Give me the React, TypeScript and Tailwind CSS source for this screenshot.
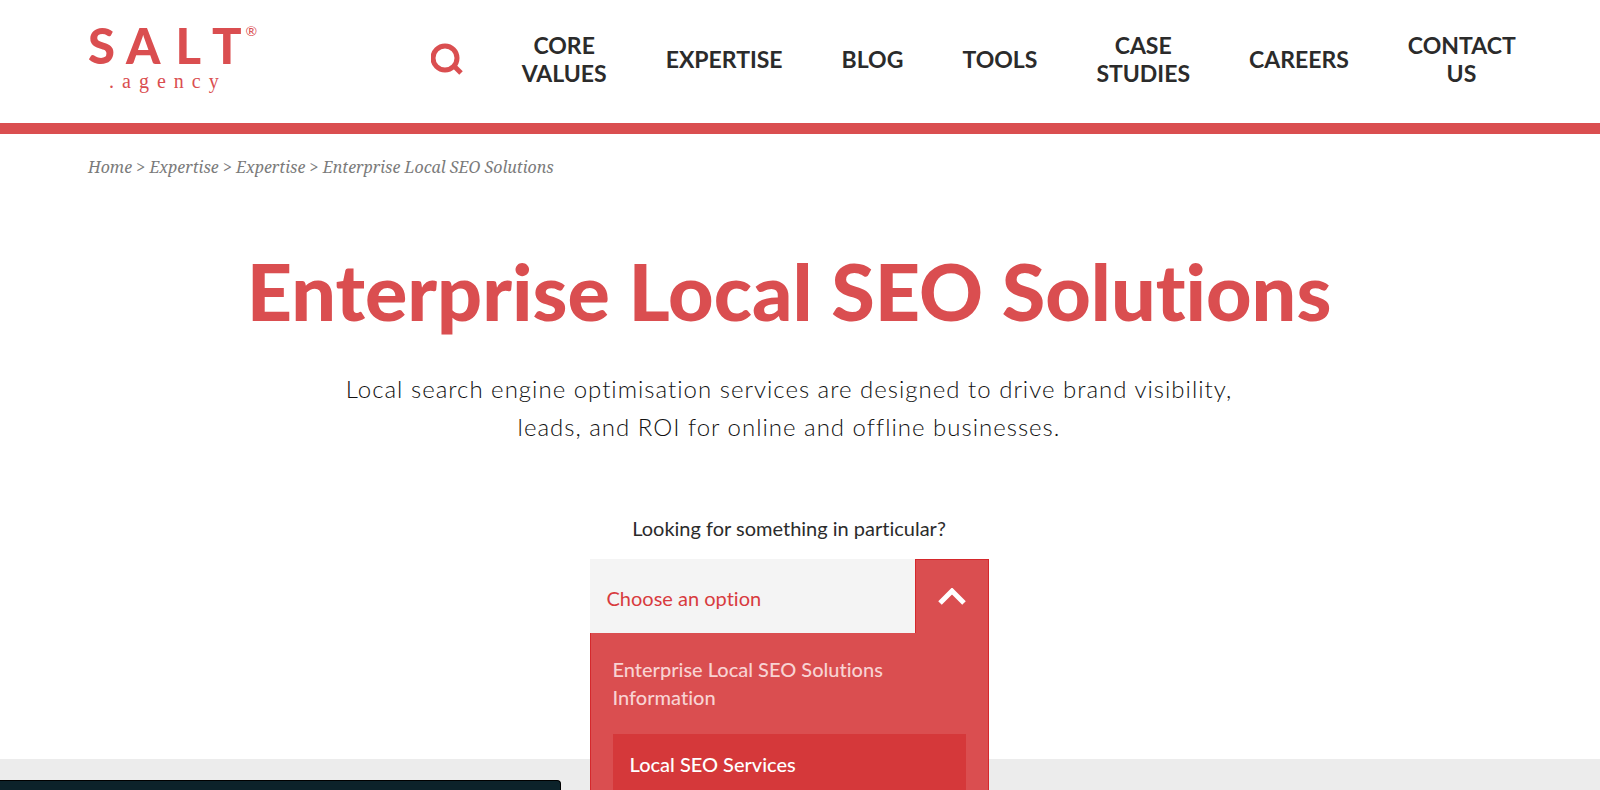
import { useState } from "react";

const navItems = ["Core Values", "Expertise", "Blog", "Tools", "Case Studies", "Careers", "Contact Us"];

const crumbs = ["Home", "Expertise", "Expertise"];

const Logo = () => (
  <a href="#home" className="mt-5 flex shrink-0 items-start gap-1 self-start text-[#da4e50]">
    <span className="flex flex-col">
      <span className="flex gap-[11px] text-[49px] leading-[50px] font-black">
        <span>S</span>
        <span>A</span>
        <span className="pl-1">L</span>
        <span>T</span>
      </span>
      <span className="pl-[21px] font-['Liberation_Serif',serif] text-[20px] leading-[22px] tracking-[8px]">.agency</span>
    </span>
    <span className="pt-[3px] text-[14px] leading-[16px]">®</span>
  </a>
);

const Header = () => (
  <header className="border-b-[11px] border-[#da4e50]">
    <div className="flex h-[123px] items-center justify-between pr-[85px] pb-[6px] pl-[88px]">
      <Logo />
      <nav className="flex items-center gap-[59px]">
        <button type="button" aria-label="Search" className="text-[#da4e50]">
          <svg viewBox="0 0 32 32" className="block h-8 w-8" fill="none" stroke="currentColor" strokeWidth="5">
            <circle cx="14" cy="15" r="12" />
            <path d="M22 22l8 8" />
          </svg>
        </button>
        {navItems.map((item) => (
          <a key={item} href="#nav" className="w-min text-center text-[23px] leading-[28px] font-bold text-[#2b2b2b] uppercase">
            {item}
          </a>
        ))}
      </nav>
    </div>
  </header>
);

const Breadcrumbs = () => (
  <nav aria-label="Breadcrumb" className="px-[88px] pt-[21px] font-['Noto_Serif','Liberation_Serif',serif] text-[16px] leading-[24px] text-[#7b7b7b] italic">
    {crumbs.map((crumb, i) => (
      <span key={i}>
        <a href="#crumb">{crumb}</a>
        {" > "}
      </span>
    ))}
    <span>Enterprise Local SEO Solutions</span>
  </nav>
);

const OptionPicker = () => {
  const [open, setOpen] = useState(true);

  return (
    <div className="relative z-10 mx-auto mt-[17px] w-[399px] text-left text-[20px] leading-[28px]">
      <button
        type="button"
        aria-expanded={open}
        onClick={() => setOpen(!open)}
        className="flex h-[74px] w-full items-stretch bg-[#f4f4f4] text-left text-[#d83b3e]"
      >
        <span className="flex flex-1 items-center pt-1 pl-[17px]">Choose an option</span>
        <span className="flex w-[74px] items-center justify-center border border-b-0 border-[#d5282c] bg-[#da4e50] text-white">
          <svg viewBox="0 0 28 18" className="block h-[18px] w-7" fill="none" stroke="currentColor" strokeWidth="5">
            <path d="M2 15L14 3l12 12" />
          </svg>
        </span>
      </button>
      {open && (
        <div className="absolute top-full left-0 w-full border-x border-[#d5282c] bg-[#da4e50] px-[22px] pt-[22px] pb-6 font-medium">
          <a href="#information" className="block text-[#f8d3d3]">
            Enterprise Local SEO Solutions Information
          </a>
          <a href="#services" className="mt-[23px] block bg-[#d5383a] px-[17px] py-4 text-white">
            Local SEO Services
          </a>
        </div>
      )}
    </div>
  );
};

const App = () => {
  return (
    <div className="relative h-screen overflow-hidden bg-white font-[Lato,sans-serif] [font-variant-ligatures:none]">
      <Header />
      <Breadcrumbs />
      <main className="pr-[22px] text-center">
        <h1 className="mt-[64px] text-[79px] leading-[96px] font-black text-[#da4e50]">Enterprise Local SEO Solutions</h1>
        <p className="mx-auto mt-[31px] max-w-[920px] text-[24px] leading-[38px] font-light tracking-[1px] text-[#111111]">
          Local search engine optimisation services are designed to drive brand visibility, leads, and ROI for online and offline businesses.
        </p>
        <p className="mt-[68px] text-[20px] leading-[28px] text-[#2b2b2b]">Looking for something in particular?</p>
        <OptionPicker />
      </main>
      <section className="mt-[126px] h-[120px] bg-[#ececec]"></section>

      {/* Top edge of the status bubble */}
      <div className="absolute bottom-0 left-0 h-[10px] w-[561px] rounded-tr-[4px] border-t border-r border-black bg-[#0c222a]"></div>
    </div>
  );
};

export default App;
